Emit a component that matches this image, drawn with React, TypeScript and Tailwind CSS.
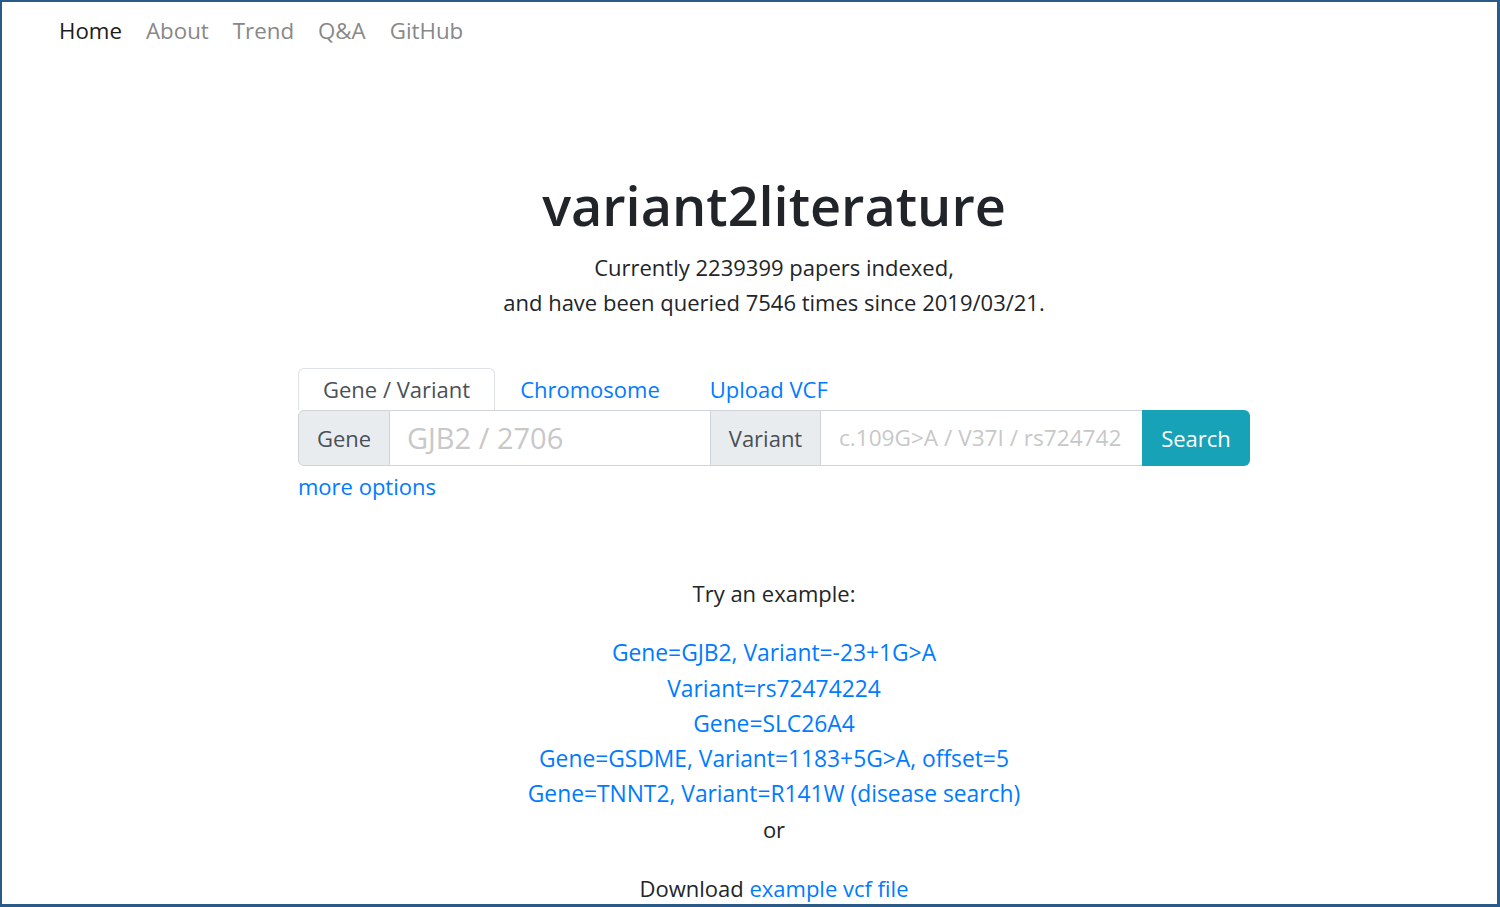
const font = { fontFamily: '"Open Sans", "Noto Sans", sans-serif' };

const examples = [
  "Gene=GJB2, Variant=-23+1G>A",
  "Variant=rs72474224",
  "Gene=SLC26A4",
  "Gene=GSDME, Variant=1183+5G>A, offset=5",
  "Gene=TNNT2, Variant=R141W (disease search)",
];

export default function App() {
  return (
    <div
      className="h-[907px] w-[1500px] overflow-hidden border-[2px] border-r-[3px] border-b-[3px] border-[#295a8a] bg-white text-[#212529]"
      style={font}
    >
      {/* Navbar */}
      <nav className="flex items-center px-[45px] pt-[12px] text-[22.3px] leading-[34px]">
        <a href="#" className="px-[12px] text-[#1c1c1c]">Home</a>
        <a href="#" className="px-[12px] text-[#888888]">About</a>
        <a href="#" className="px-[12px] text-[#888888]">Trend</a>
        <a href="#" className="px-[12px] text-[#888888]">Q&amp;A</a>
        <a href="#" className="px-[12px] text-[#888888]">GitHub</a>
      </nav>

      <main className="ml-[296px] w-[952px]">
        <h1 className="mt-[124px] text-center text-[54px] font-semibold leading-[66px] text-[#212529]">
          variant2literature
        </h1>
        <p className="mt-[12px] text-center text-[22px] leading-[35px]">
          Currently 2239399 papers indexed,
          <br />
          and have been queried 7546 times since 2019/03/21.
        </p>

        {/* Tabs */}
        <div className="mt-[48px] flex items-end text-[22px]">
          <button className="h-[42px] rounded-t-[6px] border border-b-0 border-[#dee2e6] bg-white px-[24px] text-[#495057]">
            Gene / Variant
          </button>
          <button className="h-[42px] px-[25px] text-[#007bff]">Chromosome</button>
          <button className="h-[42px] px-[25px] text-[#007bff]">Upload VCF</button>
        </div>

        {/* Input group */}
        <div className="flex h-[56px] text-[22px]">
          <span className="flex w-[92px] items-center justify-center rounded-l-[6px] border border-[#ced4da] bg-[#e9ecef] text-[#495057]">
            Gene
          </span>
          <input
            className="w-[320px] border-y border-[#ced4da] px-[17px] text-[29px] text-[#495057] outline-none placeholder:text-[#c8c8c8]"
            placeholder="GJB2 / 2706"
          />
          <span className="flex w-[111px] items-center justify-center border border-[#ced4da] bg-[#e9ecef] text-[#495057]">
            Variant
          </span>
          <input
            className="w-[321px] border-y border-[#ced4da] px-[18px] text-[22.6px] text-[#495057] outline-none placeholder:text-[#c8c8c8]"
            placeholder="c.109G>A / V37I / rs724742"
          />
          <button className="w-[108px] rounded-r-[6px] bg-[#17a2b8] text-white">Search</button>
        </div>
        <a href="#" className="block text-[22px] leading-[40px] text-[#007bff]">
          more options
        </a>

        {/* Examples */}
        <div className="mt-[70px] text-center text-[22px] leading-[35.3px]">
          <p>Try an example:</p>
          <div className="mt-[24px] text-[22.8px]">
            {examples.map((e) => (
              <a key={e} href="#" className="block text-[#007bff]">
                {e}
              </a>
            ))}
          </div>
          <p>or</p>
          <p className="mt-[24px]">
            Download <a href="#" className="text-[#007bff]">example vcf file</a>
          </p>
        </div>
      </main>
    </div>
  );
}
